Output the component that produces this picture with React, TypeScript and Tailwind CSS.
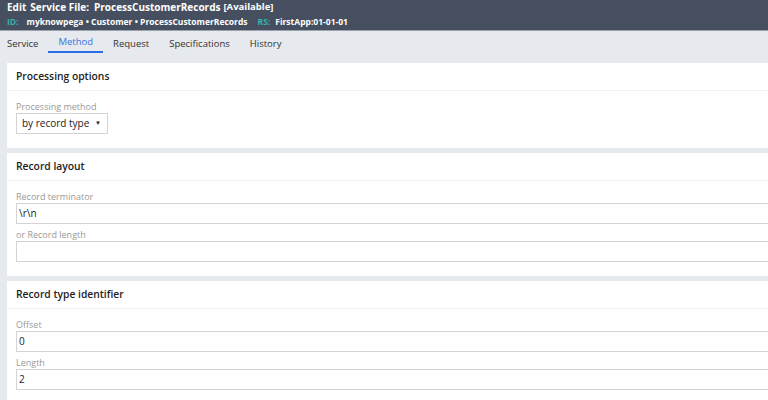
import { ReactNode } from 'react';

const tabs = ['Service', 'Method', 'Request', 'Specifications', 'History'];

function Card({ title, children }: { title: string; children: ReactNode }) {
    return (
        <div className="bg-white -mr-4">
            <div className="h-[28px] flex items-center pt-[1px] px-[9px] border-b border-[#eef0f2] text-[10.3px] font-semibold text-[#222]">
                {title}
            </div>
            <div className="px-[9px] pt-[10px] pb-[14px] flex flex-col gap-[5px]">{children}</div>
        </div>
    );
}

function Field({ label, value }: { label: string; value: string }) {
    return (
        <div>
            <div className="text-[9px] leading-[12px] text-[#9a9a9a]">{label}</div>
            <div className="h-[21px] border border-[#d4d4d4] bg-white flex items-center pl-[2px] text-[10px] text-[#222]">
                {value}
            </div>
        </div>
    );
}

export default function App() {
    return (
        <div className="w-[768px] h-[400px] overflow-hidden bg-[#e6e9ee] font-['Open_Sans',sans-serif]">
            {/* title bar */}
            <div className="h-[31px] bg-[#454f5f] px-[7px] border-b border-[#9aa3ad]">
                <div className="h-[15px] flex items-center text-[10px] font-bold text-white whitespace-pre">
                    <span>Edit</span>
                    <span className="ml-[4px]">Service File:</span>
                    <span className="ml-[5px]">ProcessCustomerRecords</span>
                    <span className="ml-[3px] text-[9.5px]">[Available]</span>
                </div>
                <div className="h-[15px] flex items-center text-[8.5px] font-bold text-white whitespace-pre">
                    <span className="text-[#35b3a7]">ID:</span>
                    <span className="ml-[8px]">myknowpega • Customer • ProcessCustomerRecords</span>
                    <span className="ml-[10px] text-[#35b3a7]">RS:</span>
                    <span className="ml-[5px]">FirstApp:01-01-01</span>
                </div>
            </div>

            {/* tabs */}
            <div className="h-[32px] flex items-start pl-[7px] gap-[20px] text-[9.5px] text-[#333]">
                {tabs.map((t) => (
                    <div
                        key={t}
                        className={`h-[22px] flex items-end pb-[2px] ${t === 'Method' ? 'text-[#3a72df] border-b-2 border-[#2b6de6] px-[10px] -mx-[10px]' : ''}`}
                    >
                        {t}
                    </div>
                ))}
            </div>

            {/* content */}
            <div className="pl-[7px] flex flex-col gap-[5px]">
                <Card title="Processing options">
                    <div>
                        <div className="text-[9px] leading-[12px] text-[#9a9a9a]">Processing method</div>
                        <div className="w-[92px] h-[21px] border border-[#d4d4d4] bg-white flex items-center justify-between pl-[5px] pr-[6px] text-[10px] text-[#222] whitespace-nowrap">
                            <span>by record type</span>
                            <span className="text-[6px]">▼</span>
                        </div>
                    </div>
                </Card>
                <Card title="Record layout">
                    <Field label="Record terminator" value="\r\n" />
                    <Field label="or Record length" value="" />
                </Card>
                <Card title="Record type identifier">
                    <Field label="Offset" value="0" />
                    <Field label="Length" value="2" />
                </Card>
            </div>
        </div>
    );
}
